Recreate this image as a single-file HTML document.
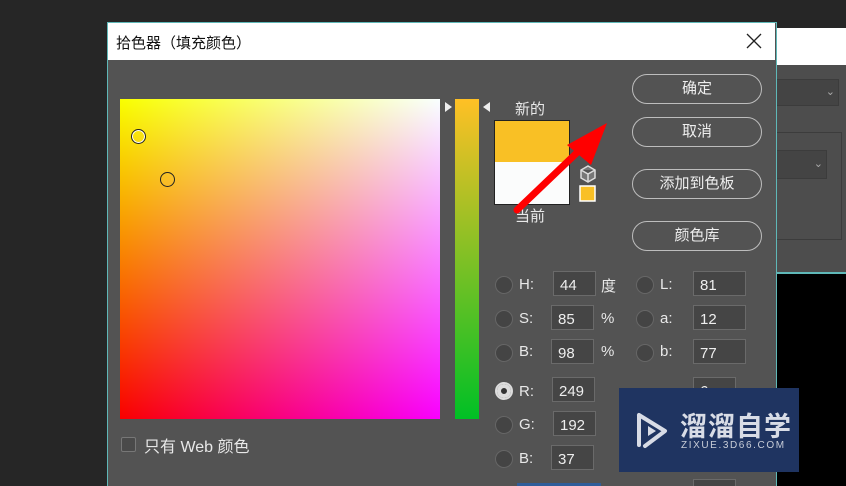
<!DOCTYPE html>
<html><head><meta charset="utf-8"><style>
html,body{margin:0;width:846px;height:486px;overflow:hidden;}
body{background:#262626;position:relative;font-family:"Liberation Sans","Noto Sans CJK SC",sans-serif;}
.a{position:absolute;}
.btn{position:absolute;left:632px;width:128px;height:28px;border:1px solid #bdbdbd;border-radius:15px;color:#eee;font-size:15px;text-align:center;line-height:28px;}
.inp{position:absolute;width:43px;height:25px;border:1px solid #6a6a6a;background:#454545;color:#eee;font-size:15px;line-height:27px;padding-left:6px;box-sizing:border-box;}
.lab{position:absolute;color:#e8e8e8;font-size:15px;}
.rad{position:absolute;width:16px;height:16px;border-radius:50%;border:1px solid #666;background:#444;}
</style></head><body>
<div class="a" style="left:776px;top:28px;width:70px;height:37px;background:#fff"></div>
<div class="a" style="left:776px;top:65px;width:70px;height:207px;background:#4d4d4d;border-bottom:2px solid #5fb8b8"></div>
<div class="a" style="left:776px;top:79px;width:61px;height:25px;background:#444;border:1px solid #3c3c3c;color:#aaa;font-size:11px;text-align:right;line-height:25px">⌄&nbsp;</div>
<div class="a" style="left:776px;top:132px;width:64px;height:106px;border:1px solid #3c3c3c"></div>
<div class="a" style="left:776px;top:150px;width:49px;height:27px;background:#444;border:1px solid #3c3c3c;color:#aaa;font-size:11px;text-align:right;line-height:27px">⌄&nbsp;</div>
<div class="a" style="left:776px;top:274px;width:70px;height:212px;background:#000"></div>
<div class="a" style="left:107px;top:22px;width:668px;height:470px;background:#535353;border:1px solid #5fb8b8"></div>
<div class="a" style="left:108px;top:23px;width:667px;height:37px;background:#fff"></div>
<div class="a" style="left:116px;top:32px;font-size:15px;color:#111">拾色器（填充颜色）</div>
<svg class="a" style="left:746px;top:33px" width="16" height="16"><path d="M1 1L15 15M15 1L1 15" stroke="#222" stroke-width="1.3"/></svg>
<div class="a" style="left:120px;top:99px;width:320px;height:320px;background-image:linear-gradient(to bottom,rgb(0,255,0),rgb(0,0,0)),linear-gradient(to right,rgb(249,0,0),rgb(249,0,255));background-blend-mode:screen"></div>
<div class="a" style="left:131px;top:129px;width:13px;height:13px;border-radius:50%;border:1px solid #222;box-shadow:inset 0 0 0 1px #fff"></div>
<div class="a" style="left:160px;top:172px;width:13px;height:13px;border-radius:50%;border:1px solid #222"></div>
<div class="a" style="left:455px;top:99px;width:24px;height:320px;background:linear-gradient(to bottom,rgb(255,192,37),rgb(0,192,37))"></div>
<div class="a" style="left:445px;top:102px;width:0;height:0;border-left:7px solid #eee;border-top:5px solid transparent;border-bottom:5px solid transparent"></div>
<div class="a" style="left:483px;top:102px;width:0;height:0;border-right:7px solid #eee;border-top:5px solid transparent;border-bottom:5px solid transparent"></div>
<div class="lab" style="left:515px;top:98px">新的</div>
<div class="a" style="left:494px;top:120px;width:74px;height:42px;background:#f9c025;border:1px solid #222;border-bottom:none"></div>
<div class="a" style="left:494px;top:162px;width:74px;height:42px;background:#fbfcfc;border:1px solid #222;border-top:none"></div>
<div class="lab" style="left:515px;top:205px">当前</div>
<svg class="a" style="left:578px;top:164px" width="20" height="40"><path d="M10 2l7 4v8l-7 4-7-4V6z M3 6l7 4 7-4 M10 10v8" fill="#777" stroke="#ddd" stroke-width="1.5"/><rect x="2" y="22" width="15" height="15" fill="#f9c025" stroke="#fff" stroke-width="1.5"/></svg>
<svg class="a" style="left:505px;top:115px" width="110" height="105"><line x1="12" y1="95" x2="80" y2="30" stroke="#f00" stroke-width="7" stroke-linecap="round"/><polygon points="102,8 62,30 86,50" fill="#f00"/></svg>
<div class="btn" style="top:74px">确定</div>
<div class="btn" style="top:117px">取消</div>
<div class="btn" style="top:169px">添加到色板</div>
<div class="btn" style="top:221px">颜色库</div>
<div class="rad" style="left:495px;top:276px"></div><div class="lab" style="left:519px;top:276px">H:</div><div class="inp" style="left:553px;top:271px">44</div><div class="lab" style="left:601px;top:275px">度</div>
<div class="rad" style="left:495px;top:310px"></div><div class="lab" style="left:519px;top:310px">S:</div><div class="inp" style="left:551px;top:305px">85</div><div class="lab" style="left:601px;top:310px">%</div>
<div class="rad" style="left:495px;top:344px"></div><div class="lab" style="left:519px;top:343px">B:</div><div class="inp" style="left:551px;top:339px">98</div><div class="lab" style="left:601px;top:343px">%</div>
<div class="a" style="left:495px;top:382px;width:14px;height:14px;border-radius:50%;border:2px solid #ddd;background:#333;box-shadow:inset 0 0 0 4px #ddd"></div><div class="lab" style="left:519px;top:383px">R:</div><div class="inp" style="left:552px;top:377px">249</div>
<div class="rad" style="left:495px;top:416px"></div><div class="lab" style="left:519px;top:416px">G:</div><div class="inp" style="left:553px;top:411px">192</div>
<div class="rad" style="left:495px;top:450px"></div><div class="lab" style="left:519px;top:450px">B:</div><div class="inp" style="left:551px;top:445px">37</div>
<div class="a" style="left:517px;top:483px;width:84px;height:3px;background:#2f5d9a"></div>
<div class="rad" style="left:636px;top:276px"></div><div class="lab" style="left:660px;top:276px">L:</div><div class="inp" style="left:693px;top:271px;width:53px">81</div>
<div class="rad" style="left:636px;top:310px"></div><div class="lab" style="left:660px;top:310px">a:</div><div class="inp" style="left:693px;top:305px;width:53px">12</div>
<div class="rad" style="left:636px;top:344px"></div><div class="lab" style="left:660px;top:343px">b:</div><div class="inp" style="left:693px;top:339px;width:53px">77</div>
<div class="inp" style="left:693px;top:377px">6</div>
<div class="inp" style="left:693px;top:479px"></div>
<div class="a" style="left:121px;top:437px;width:13px;height:13px;border:1px solid #777;border-radius:2px;background:#4a4a4a"></div>
<div class="lab" style="left:144px;top:433px;font-size:16px">只有 Web 颜色</div>
<div class="a" style="left:619px;top:388px;width:180px;height:84px;background:#1f3461"></div>
<svg class="a" style="left:632px;top:410px" width="40" height="42"><path d="M7 5v30 M7 5l26 16-20 15" fill="none" stroke="#d8dce6" stroke-width="4" stroke-linejoin="round" stroke-linecap="round"/><path d="M16 16v10l8-5z" fill="#d8dce6"/></svg>
<div class="a" style="left:680px;top:405px;font-size:27px;font-weight:bold;color:#d8dce6;letter-spacing:1px">溜溜自学</div>
<div class="a" style="left:681px;top:440px;font-size:10px;color:#c8cdd8;letter-spacing:1.6px">ZIXUE.3D66.COM</div>
</body></html>
